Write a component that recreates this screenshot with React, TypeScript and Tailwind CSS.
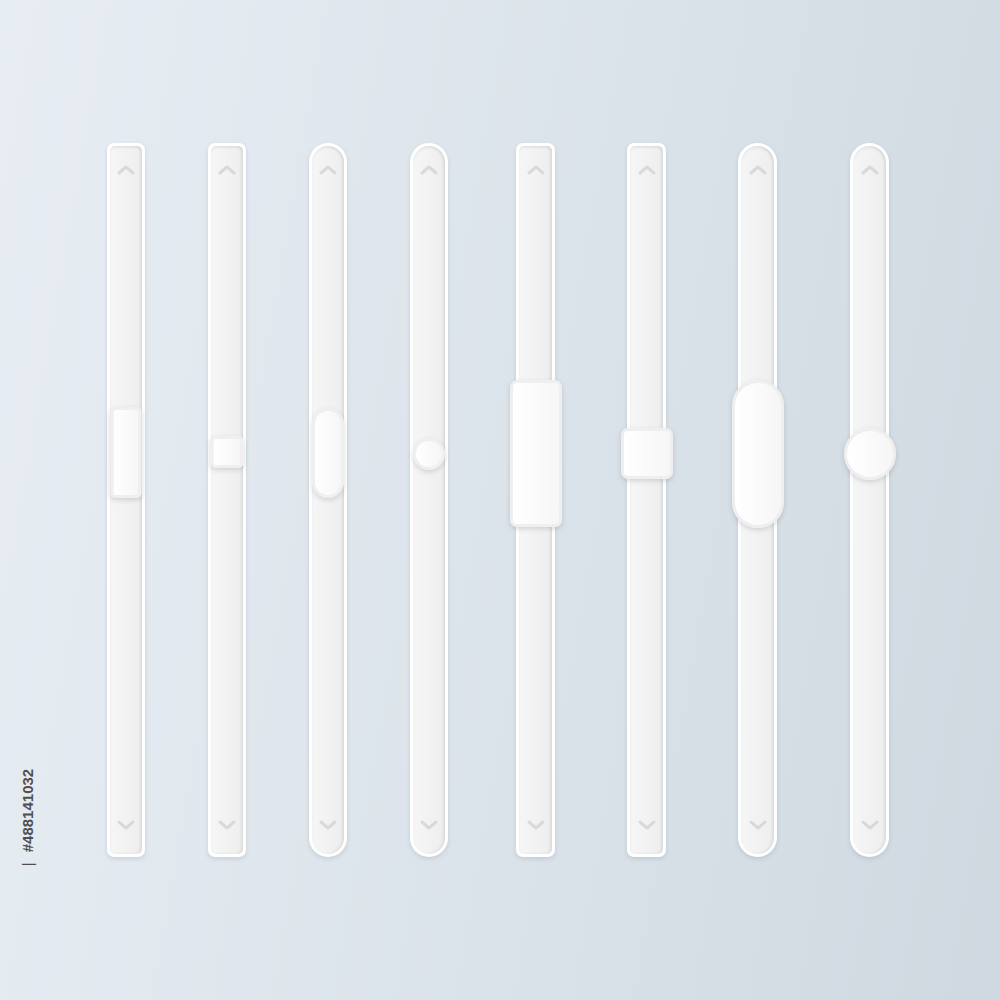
import type { ReactNode } from "react";

type Slider = {
  id: number;
  ml: string;
  w: string;
  round: string;
  inner: string;
  thumb: string;
};

// Eight vertical sliders: square-ish and pill shaped tracks, with different thumbs
const SLIDERS: Slider[] = [
  { id: 1, ml: "ml-[107px]", w: "w-[38px]", round: "rounded-[7px]", inner: "rounded-[5px]", thumb: "top-[264px] w-[31px] h-[91px] rounded-[5px]" },
  { id: 2, ml: "ml-[63px]", w: "w-[38px]", round: "rounded-[7px]", inner: "rounded-[5px]", thumb: "top-[293px] w-[33px] h-[32px] rounded-[5px]" },
  { id: 3, ml: "ml-[63px]", w: "w-[38px]", round: "rounded-full", inner: "rounded-full", thumb: "top-[265px] w-[32px] h-[90px] rounded-full" },
  { id: 4, ml: "ml-[63px]", w: "w-[38px]", round: "rounded-full", inner: "rounded-full", thumb: "top-[295px] w-[32px] h-[32px] rounded-full" },
  { id: 5, ml: "ml-[68px]", w: "w-[39px]", round: "rounded-[7px]", inner: "rounded-[5px]", thumb: "top-[237px] w-[52px] h-[147px] rounded-[7px]" },
  { id: 6, ml: "ml-[72px]", w: "w-[39px]", round: "rounded-[7px]", inner: "rounded-[5px]", thumb: "top-[285px] w-[52px] h-[51px] rounded-[7px]" },
  { id: 7, ml: "ml-[72px]", w: "w-[39px]", round: "rounded-full", inner: "rounded-full", thumb: "top-[237px] w-[52px] h-[148px] rounded-full" },
  { id: 8, ml: "ml-[73px]", w: "w-[39px]", round: "rounded-full", inner: "rounded-full", thumb: "top-[285px] w-[52px] h-[52px] rounded-full" },
];

function Chevron({ down }: { down?: boolean }) {
  return (
    <svg width="18" height="10" viewBox="0 0 18 10" className="shrink-0">
      <polyline
        points={down ? "2,2 9,8 16,2" : "2,8 9,2 16,8"}
        fill="none"
        stroke="#d7dadd"
        strokeWidth="3"
        strokeLinecap="round"
        strokeLinejoin="round"
      />
    </svg>
  );
}

function Track({ s, children }: { s: Slider; children?: ReactNode }) {
  return (
    <div className={`relative h-[714px] ${s.w} ${s.ml} ${s.round} bg-white p-[3px] shadow-[0_2px_4px_rgba(90,105,120,0.18)]`}>
      <div
        className={`flex h-full flex-col items-center justify-between pt-[19px] pb-[24px] ${s.inner} bg-gradient-to-r from-[#f6f6f7] to-[#eeeeef] shadow-[inset_-2px_0_3px_rgba(0,0,0,0.07),inset_0_2px_3px_rgba(0,0,0,0.05)]`}
      >
        <Chevron />
        <Chevron down />
      </div>
      {children}
    </div>
  );
}

export default function App() {
  return (
    <div className="relative flex h-[1000px] w-[1000px] items-start overflow-hidden bg-[linear-gradient(100deg,#e7edf3_0%,#dbe3ea_55%,#cfd8e0_100%)] pt-[143px] font-['Liberation_Sans',sans-serif]">
      {SLIDERS.map((s) => (
        <Track key={s.id} s={s}>
          <div
            className={`absolute left-1/2 -translate-x-1/2 ${s.thumb} border-[3px] border-[#efeff0] bg-gradient-to-r from-white to-[#f6f6f7] shadow-[0_2px_5px_rgba(80,90,100,0.22)]`}
          />
        </Track>
      ))}

      {/* stock id printed along the left edge */}
      <div className="absolute left-[17px] top-[760px] flex h-[115px] w-[22px] items-end justify-center">
        <span className="origin-center -rotate-90 whitespace-nowrap text-[15px] font-bold leading-none text-[#4d4f52] translate-y-[-50px]">
          <span className="mr-[10px] font-normal">|</span>#488141032
        </span>
      </div>
    </div>
  );
}
